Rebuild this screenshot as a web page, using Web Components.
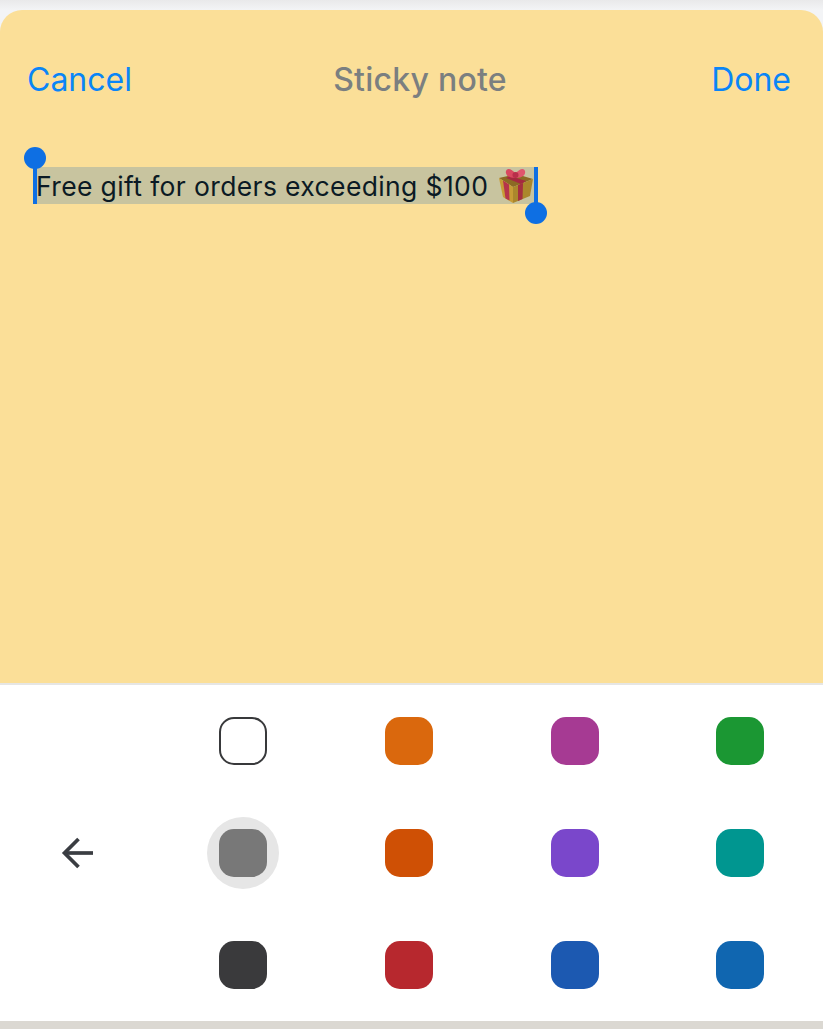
<!DOCTYPE html>
<html>
<head>
<meta charset="utf-8">
<title>Sticky note</title>
<style>
  html, body { margin: 0; padding: 0; }
  body {
    width: 823px;
    height: 1029px;
    overflow: hidden;
    background: #dbd8d2;
    font-family: Inter, "Noto Sans", sans-serif;
  }
</style>
</head>
<body>
<sticky-sheet>
  <note-header slot="header" title="Sticky note"></note-header>
  <note-selection slot="text">Free gift for orders exceeding $100</note-selection>
</sticky-sheet>
<swatch-grid></swatch-grid>

<script>
class StickySheet extends HTMLElement {
  constructor() {
    super();
    this.attachShadow({ mode: "open" });
    this.shadowRoot.innerHTML = `
      <style>
        :host {
          display: block;
          background: linear-gradient(#e9e9ea, #f3f4f6 10px);
        }
        .sheet {
          height: 673px;
          box-sizing: border-box;
          background: #fbdf98;
          border-radius: 22px 22px 0 0;
          padding-top: 47px;
        }
        .top { height: 10px; }
        .rule { height: 2px; background: #e6e6e4; }
        .body { padding: 64px 0 0 33px; }
      </style>
      <div class="top"></div>
      <div class="sheet">
        <slot name="header"></slot>
        <div class="body"><slot name="text"></slot></div>
      </div>
      <div class="rule"></div>
    `;
  }
}
customElements.define("sticky-sheet", StickySheet);

class NoteHeader extends HTMLElement {
  constructor() {
    super();
    this.attachShadow({ mode: "open" });
    this.shadowRoot.innerHTML = `
      <style>
        :host {
          display: grid;
          grid-template-columns: 1fr auto 1fr;
          align-items: center;
          height: 46px;
          padding: 0 32px 0 27px;
          font-size: 32px;
          line-height: 46px;
          color: #0a85f7;
        }
        .title { color: #7b7f80; font-weight: 500; margin-left: 22px; letter-spacing: .25px; }
        .done { text-align: right; }
      </style>
      <span>Cancel</span>
      <span class="title">${this.getAttribute("title") || ""}</span>
      <span class="done">Done</span>
    `;
  }
}
customElements.define("note-header", NoteHeader);

class NoteSelection extends HTMLElement {
  constructor() {
    super();
    this.attachShadow({ mode: "open" });
    this.shadowRoot.innerHTML = `
      <style>
        :host {
          display: block;
          position: relative;
          width: 505px;
          height: 37px;
        }
        .range {
          display: flex;
          align-items: center;
          gap: 9px;
          height: 37px;
          box-sizing: border-box;
          margin-left: 3px;
          width: 499px;
          background: #c8c49f;
          color: #0b1a24;
          font-size: 26.5px;
          letter-spacing: .37px;
          line-height: 37px;
          white-space: nowrap;
        }
        .label { display: block; height: 37px; padding-top: 1px; box-sizing: border-box; }
        .bar { position: absolute; width: 4px; height: 37px; top: 0; background: #0e6fe3; }
        .dot { position: absolute; width: 22px; height: 22px; border-radius: 50%; background: #0e6fe3; }
        .start { left: 0; }
        .end { left: 501px; }
        .dot.start { left: -9px; top: -20px; }
        .dot.end { left: 492px; top: 35px; }
        svg { flex: none; display: block; }
      </style>
      <div class="range">
        <span class="label"><slot></slot></span>
        <svg width="37" height="37" viewBox="0 0 37 37">
          <path d="M2 11 19 7 36 12 16 20z" fill="#8c6a24"/>
          <path d="M2 11 16 20 16 36 6 30z" fill="#c79c36"/>
          <path d="M16 20 36 12 33 29 16 36z" fill="#ab872c"/>
          <path d="M6 13.500 12 17.500 12.500 33.500 8.500 31.500z" fill="#b5344a"/>
          <path d="M21 18 26 16 25.500 32 21 34z" fill="#a5303f"/>
          <path d="M9 11 13 9 29 14 24 17z" fill="#a5293f"/>
          <path d="M18 11C12 11 8 8 9 4c1-3 5-3 10 3z" fill="#d9485f"/>
          <path d="M19 11c6 0 10-3 9-7-1-3-5-3-10 3z" fill="#e0566c"/>
          <circle cx="18.500" cy="8" r="3" fill="#b92f4a"/>
        </svg>
      </div>
      <div class="bar start"></div>
      <div class="dot start"></div>
      <div class="bar end"></div>
      <div class="dot end"></div>
    `;
  }
}
customElements.define("note-selection", NoteSelection);

class ColorSwatch extends HTMLElement {
  static get observedAttributes() {
    return ["color"];
  }
  constructor() {
    super();
    this.attachShadow({ mode: "open" });
  }
  connectedCallback() {
    this.render();
  }
  attributeChangedCallback() {
    this.render();
  }
  render() {
    const color = this.getAttribute("color") || "#fff";
    this.shadowRoot.innerHTML = `
      <style>
        :host { display: grid; place-items: center; position: relative; }
        .chip {
          width: 48px;
          height: 48px;
          box-sizing: border-box;
          border-radius: 15px;
          background: ${color};
          position: relative;
        }
        :host([outlined]) .chip { border: 2px solid #38393b; }
        :host([selected])::before {
          content: "";
          position: absolute;
          width: 72px;
          height: 72px;
          border-radius: 50%;
          background: #e6e6e6;
        }
      </style>
      <div class="chip"></div>
    `;
  }
}
customElements.define("color-swatch", ColorSwatch);

class SwatchGrid extends HTMLElement {
  constructor() {
    super();
    this.attachShadow({ mode: "open" });
    const rows = [
      [{ c: "#ffffff", o: 1 }, { c: "#da680d" }, { c: "#a63a93" }, { c: "#1b9733" }],
      [{ c: "#787878", s: 1 }, { c: "#cf5005" }, { c: "#7a47cb" }, { c: "#009690" }],
      [{ c: "#3a3a3c" }, { c: "#b7282e" }, { c: "#1c59b1" }, { c: "#1066b0" }],
    ];
    const cell = (r, i, j) =>
      `<color-swatch style="grid-row:${i + 1};grid-column:${j + 2}" color="${r.c}"${r.o ? " outlined" : ""}${r.s ? " selected" : ""}></color-swatch>`;
    this.shadowRoot.innerHTML = `
      <style>
        :host {
          display: grid;
          grid-template-columns: 160px 166px 166px 166px 164px;
          grid-template-rows: repeat(3, 112px);
          background: #fff;
        }
        .back {
          grid-row: 2;
          grid-column: 1;
          display: grid;
          place-items: center;
          padding-right: 6px;
        }
        svg { display: block; }
      </style>
      <div class="back">
        <svg width="36" height="36" viewBox="0 0 36 36" fill="none" stroke="#3a3d42" stroke-width="3.700">
          <path d="M34 18H6"/>
          <path d="M19.500 4 5.500 18l14 14"/>
        </svg>
      </div>
      ${rows.map((row, i) => row.map((r, j) => cell(r, i, j)).join("")).join("")}
    `;
  }
}
customElements.define("swatch-grid", SwatchGrid);
</script>
</body>
</html>
